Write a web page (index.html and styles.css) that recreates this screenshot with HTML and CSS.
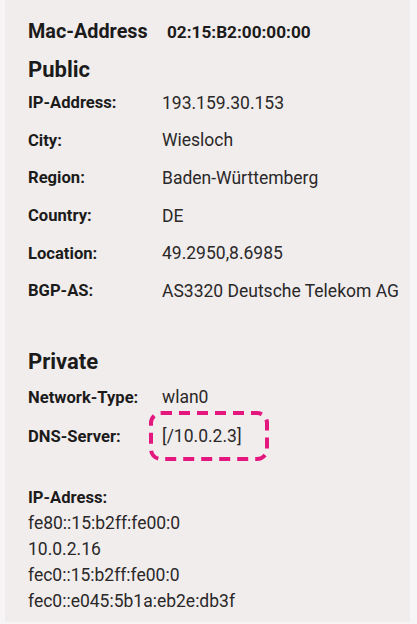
FILE: index.html
```html
<!DOCTYPE html>
<html>
<head>
<meta charset="utf-8">
<link rel="stylesheet" href="styles.css">
</head>
<body>
<div class="card">
  <div class="mac">
    <span class="mac-label">Mac-Address</span>
    <span class="mac-value">02:15:B2:00:00:00</span>
  </div>
  <h2 class="section">Public</h2>
  <div class="rows">
    <div class="row"><span class="label">IP-Address:</span><span class="value">193.159.30.153</span></div>
    <div class="row"><span class="label">City:</span><span class="value">Wiesloch</span></div>
    <div class="row"><span class="label">Region:</span><span class="value">Baden-Württemberg</span></div>
    <div class="row"><span class="label">Country:</span><span class="value">DE</span></div>
    <div class="row"><span class="label">Location:</span><span class="value">49.2950,8.6985</span></div>
    <div class="row"><span class="label">BGP-AS:</span><span class="value">AS3320 Deutsche Telekom AG</span></div>
  </div>
  <h2 class="section private">Private</h2>
  <div class="rows priv">
    <div class="row"><span class="label">Network-Type:</span><span class="value">wlan0</span></div>
    <div class="row"><span class="label">DNS-Server:</span><span class="value dns">[/10.0.2.3]<svg class="mark" width="120" height="50" viewBox="0 0 120 50"><rect x="2" y="2" width="116" height="46" rx="10" ry="10" fill="none" stroke="#e4177f" stroke-width="4" stroke-dasharray="11 7"/></svg></span></div>
  </div>
  <div class="ips">
    <div class="ips-label">IP-Adress:</div>
    <div class="ip">fe80::15:b2ff:fe00:0</div>
    <div class="ip">10.0.2.16</div>
    <div class="ip">fec0::15:b2ff:fe00:0</div>
    <div class="ip">fec0::e045:5b1a:eb2e:db3f</div>
  </div>
</div>
</body>
</html>
```

FILE: styles.css
```css
html, body {
  margin: 0;
  padding: 0;
  background: #f7f5f5;
}
body {
  padding: 0 7px 2px 5px;
  font-family: Roboto, "Noto Sans", sans-serif;
  color: #1c1b1b;
}
.card {
  background: #f1eded;
  min-height: 622px;
  padding: 18px 0 0 23px;
  box-sizing: border-box;
}
.mac {
  display: flex;
  align-items: baseline;
  height: 28px;
  line-height: 28px;
}
.mac-label {
  font-weight: 700;
  font-size: 19.8px;
  width: 139px;
}
.mac-value {
  font-weight: 700;
  font-size: 17.2px;
}
.section {
  margin: 0;
  font-size: 22px;
  font-weight: 700;
  line-height: 28px;
  height: 28px;
  margin-top: 10px;
}
.section.private {
  margin-top: 38px;
}
.rows {
  display: flex;
  flex-direction: column;
}
.row {
  display: flex;
  height: 37.6px;
  align-items: center;
}
.priv .row {
  height: 39px;
}
.priv .row:first-child {
  margin-top: 2px;
}
.label {
  font-weight: 700;
  font-size: 16.6px;
  width: 134px;
  flex: none;
}
.value {
  font-size: 17.5px;
  color: #2a2828;
}
.dns {
  position: relative;
}
.mark {
  position: absolute;
  left: -13px;
  top: -15px;
}
.ips {
  margin-top: 30px;
}
.ips-label {
  font-weight: 700;
  font-size: 16.6px;
  line-height: 24px;
}
.ip {
  font-size: 17.5px;
  line-height: 26px;
  color: #2a2828;
}
```
